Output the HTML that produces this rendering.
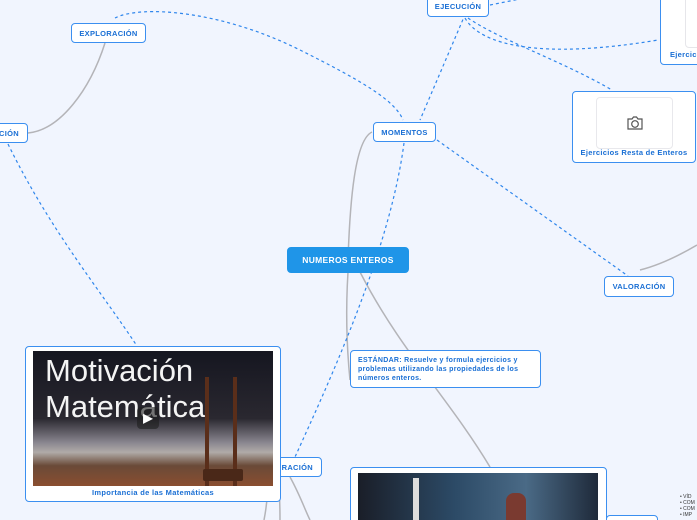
<!DOCTYPE html>
<html style="overflow:hidden;height:520px"><head><meta charset="utf-8"><style>
body{margin:0;width:697px;height:520px;overflow:hidden;background:#f1f5fe;font-family:"Liberation Sans",sans-serif;position:relative}
.n{position:absolute;background:#fff;border:1.5px solid #3b8ff0;border-radius:4px;color:#1a6fd4;font-weight:bold;font-size:7.5px;display:flex;align-items:center;justify-content:center;box-sizing:border-box;letter-spacing:0.3px}
svg{position:absolute;left:0;top:0}
</style></head><body>
<svg width="697" height="520">
<g fill="none" stroke="#b4b4b8" stroke-width="1.5">
<path d="M105 43 C90 90 60 130 28 133"/>
<path d="M372 132 C355 140 350 200 348 260"/>
<path d="M348 272 C345 320 348 360 350 380"/>
<path d="M360 272 C400 350 450 400 490 467"/>
<path d="M640 270 C660 265 680 255 697 245"/>
<path d="M290 477 C300 495 305 510 310 520"/>
<path d="M268 476 C268 495 266 510 264 520"/>
<path d="M278 476 C280 495 280 510 280 520"/>
</g>
<g fill="none" stroke="#2f86ec" stroke-width="1.2" stroke-dasharray="3,3">
<path d="M115 18 C140 5 220 10 300 50 C360 80 395 100 403 120"/>
<path d="M470 3 L420 120"/>
<path d="M468 18 C500 40 560 60 612 90"/>
<path d="M465 18 C480 45 540 60 658 40"/>
<path d="M490 5 L540 -5"/>
<path d="M437 140 L628 276"/>
<path d="M404 143 C390 250 330 380 295 457"/>
<path d="M8 144 C50 230 100 290 137 346"/>
</g>
</svg>
<div class="n" style="left:71px;top:23px;width:75px;height:20px">EXPLORACIÓN</div>
<div class="n" style="left:-30px;top:123px;width:58px;height:20px;justify-content:flex-end;padding-right:8px">CIÓN</div>
<div class="n" style="left:427px;top:-4px;width:62px;height:21px">EJECUCIÓN</div>
<div class="n" style="left:373px;top:122px;width:63px;height:20px">MOMENTOS</div>
<div class="n" style="left:287px;top:247px;width:122px;height:26px;background:#1f95e8;border-color:#1f95e8;color:#fff;font-size:8.5px">NUMEROS ENTEROS</div>
<div class="n" style="left:660px;top:-5px;width:45px;height:70px;align-items:flex-end;justify-content:flex-start;padding:0 0 5px 9px">Ejercici<div style="position:absolute;left:24px;top:0;width:30px;height:50px;background:#fff;border:1px solid #e6e6ea;border-radius:4px"></div></div>
<div class="n" style="left:572px;top:91px;width:124px;height:72px;align-items:flex-end;padding-bottom:5px">Ejercicios Resta de Enteros
<div style="position:absolute;left:23px;top:5px;width:75px;height:50px;background:#fff;border:1px solid #e8e8ec;border-radius:4px;display:flex;align-items:center;justify-content:center"><svg style="position:static" width="18" height="16" viewBox="0 0 18 16"><path d="M2 4h4l1.5-2h3L12 4h4v10H2z" fill="none" stroke="#555" stroke-width="1.2"/><circle cx="9" cy="9" r="3.3" fill="none" stroke="#555" stroke-width="1.2"/></svg></div></div>
<div class="n" style="left:604px;top:276px;width:70px;height:21px">VALORACIÓN</div>
<div class="n" style="left:350px;top:350px;width:191px;height:38px;justify-content:flex-start;padding:0 7px;font-size:7px;line-height:9px;text-align:left">ESTÁNDAR: Resuelve y formula ejercicios y problemas utilizando las propiedades de los números enteros.</div>
<div class="n" style="left:265px;top:457px;width:57px;height:20px;justify-content:flex-end;padding-right:8px">TURACIÓN</div>
<div class="n" style="left:25px;top:346px;width:256px;height:156px;align-items:flex-end;padding-bottom:4px">Importancia de las Matemáticas
<div style="position:absolute;left:7px;top:4px;width:240px;height:135px;background:linear-gradient(#151620 0%,#2a2830 50%,#8a8790 68%,#b0aba8 75%,#6a4a38 85%,#8a4e30 100%);overflow:hidden">
<div style="position:absolute;left:12px;top:2px;color:#f4f4f4;font-weight:normal;font-size:31px;line-height:36px;letter-spacing:0">Motivación<br>Matemática</div>
<div style="position:absolute;left:172px;top:26px;width:32px;height:110px;border-left:4px solid #5a2e1a;border-right:4px solid #5a2e1a;box-sizing:border-box"></div>
<div style="position:absolute;left:170px;top:118px;width:40px;height:12px;background:#4a2818;border-radius:2px"></div>
<div style="position:absolute;left:104px;top:56px;width:22px;height:22px;background:rgba(30,30,30,.6);border-radius:4px;color:#fff;font-size:12px;display:flex;align-items:center;justify-content:center">▶</div>
</div></div>
<div class="n" style="left:350px;top:467px;width:257px;height:60px;align-items:flex-start">
<div style="position:absolute;left:7px;top:5px;width:240px;height:60px;background:linear-gradient(90deg,#1a1e28,#2c4a66 40%,#4a6a86 70%,#1f2a3a)"><div style="position:absolute;left:55px;top:5px;width:6px;height:55px;background:#ddd"></div><div style="position:absolute;left:148px;top:20px;width:20px;height:40px;background:#7a3a30;border-radius:8px 8px 0 0"></div></div></div>
<div class="n" style="left:606px;top:515px;width:52px;height:20px"></div>
<div style="position:absolute;left:680px;top:494px;font-size:5px;line-height:6px;color:#333">• VÍD<br>• COM<br>• COM<br>• IMP</div>
</body></html>
